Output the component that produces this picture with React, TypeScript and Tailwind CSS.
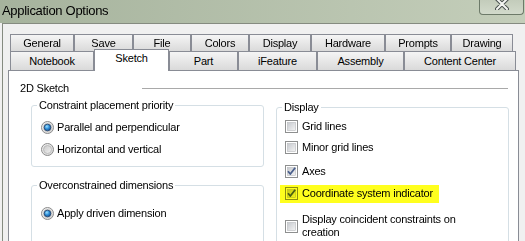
import type { ReactNode } from 'react';

const ROW1: [string, number][] = [
  ['General', 64],
  ['Save', 59],
  ['File', 58],
  ['Colors', 58],
  ['Display', 62],
  ['Hardware', 74],
  ['Prompts', 66],
  ['Drawing', 62],
];

const ROW2: [string, number][] = [
  ['Notebook', 84],
  ['Sketch', 75],
  ['Part', 69],
  ['iFeature', 79],
  ['Assembly', 87],
  ['Content Center', 112],
];

function Radio({ checked }: { checked?: boolean }) {
  return (
    <svg width="13" height="13" viewBox="0 0 13 13" className="shrink-0">
      <defs>
        <linearGradient id="rg-ring" x1="0" y1="0" x2="1" y2="1">
          <stop offset="0" stopColor="#f4f4f4" />
          <stop offset="1" stopColor="#d2d2d2" />
        </linearGradient>
        <linearGradient id="rg-in" x1="0" y1="0" x2="1" y2="1">
          <stop offset="0" stopColor="#c9c9c9" />
          <stop offset="1" stopColor="#f2f2f2" />
        </linearGradient>
        <radialGradient id="rg-dot" cx="0.4" cy="0.35" r="0.7">
          <stop offset="0" stopColor="#9be0ff" />
          <stop offset="0.5" stopColor="#2f8fd8" />
          <stop offset="1" stopColor="#0f4d92" />
        </radialGradient>
      </defs>
      <circle cx="6.5" cy="6.5" r="6" fill="url(#rg-ring)" stroke="#8c8c8c" />
      <circle cx="6.5" cy="6.5" r="4" fill="url(#rg-in)" stroke="#b4b4b4" strokeWidth="0.8" />
      {checked && <circle cx="6.5" cy="6.5" r="3.3" fill="url(#rg-dot)" stroke="#22416b" strokeWidth="0.8" />}
    </svg>
  );
}

function Check({ checked }: { checked?: boolean }) {
  return (
    <svg width="13" height="13" viewBox="0 0 13 13" className="shrink-0">
      <defs>
        <linearGradient id="cb-in" x1="0" y1="0" x2="1" y2="1">
          <stop offset="0" stopColor="#c6c9ce" />
          <stop offset="1" stopColor="#f4f4f4" />
        </linearGradient>
      </defs>
      <rect x="0.5" y="0.5" width="12" height="12" fill="#ffffff" stroke="#8e8f8f" />
      <rect x="2.5" y="2.5" width="8" height="8" fill="url(#cb-in)" stroke="#b7b9bd" strokeWidth="0.6" />
      {checked && (
        <path d="M3 6.2 L5.3 9 L10.2 2.8" fill="none" stroke="#4a5f8c" strokeWidth="1.8" strokeLinejoin="round" />
      )}
    </svg>
  );
}

function Group({ label, className, children }: { label: string; className?: string; children: ReactNode }) {
  return (
    <div className={`rounded-[3px] border border-[#d5dfe5] ${className ?? ''}`}>
      <div className="-mt-[8px] ml-[5px] w-fit bg-white px-[2px] leading-[14px]">{label}</div>
      {children}
    </div>
  );
}

export default function App() {
  return (
    <div className="flex h-[241px] w-[525px] flex-col overflow-hidden bg-[#f0f0f0] font-['Liberation_Sans',Arial,sans-serif] text-[11px] tracking-[-0.2px] text-black">
      {/* title bar */}
      <div className="flex h-[23px] shrink-0 items-start justify-between bg-gradient-to-r from-[#a6b39d] to-[#c4ceba]">
        <span className="pl-[2px] pt-[2px] text-[13px] leading-[18px] tracking-[-0.3px]">Application Options</span>
        <div className="mr-[1px] flex h-[15px] w-[45px] justify-center overflow-hidden rounded-b-[4px] border-x border-b border-[#6d7a69] bg-gradient-to-b from-[#c3ccbb] to-[#d2dacb]">
          <svg width="14" height="12" viewBox="0 0 14 12" className="-mt-[2px]">
            <path d="M2 1 L12 11 M12 1 L2 11" stroke="#4a5150" strokeWidth="4" strokeLinecap="round" />
            <path d="M2 1 L12 11 M12 1 L2 11" stroke="#f4f6f2" strokeWidth="2" strokeLinecap="round" />
          </svg>
        </div>
      </div>

      {/* dialog body */}
      <div className="ml-[2px] flex flex-1 flex-col border-l border-t border-[#858b80] pl-[5px] pt-[10px]">
        <div className="ml-[2px] flex h-[18px]">
          {ROW1.map(([name, w]) => (
            <div
              key={name}
              style={{ width: w }}
              className="flex items-center justify-center border border-[#898c95] bg-gradient-to-b from-[#f5f5f5] to-[#dadada] leading-none"
            >
              {name}
            </div>
          ))}
        </div>
        <div className="relative z-10 ml-[2px] -mt-px flex h-[19px] items-end">
          {ROW2.map(([name, w]) =>
            name === 'Sketch' ? (
              <div
                key={name}
                style={{ width: w }}
                className="-mb-px flex h-[22px] items-start justify-center border-x border-t border-[#898c95] bg-white pt-[3px] leading-none"
              >
                {name}
              </div>
            ) : (
              <div
                key={name}
                style={{ width: w }}
                className="flex h-[19px] items-center justify-center border-x border-t border-[#898c95] bg-gradient-to-b from-[#f5f5f5] to-[#dadada] leading-none"
              >
                {name}
              </div>
            ),
          )}
        </div>

        {/* panel */}
        <div className="mr-[6px] flex-1 border border-[#898c95] bg-white pt-[9px]">
          <div className="flex h-[16px] items-center justify-between pl-[11px] pr-[10px]">
            <span>2D Sketch</span>
            <div className="h-px w-[366px] bg-[#a9a9a9]" />
          </div>
          <div className="flex gap-[12px] pl-[22px]">
            <div className="w-[233px]">
              <Group label="Constraint placement priority" className="mt-[9px] pb-[6px]">
                <div className="mt-[4px] flex h-[22px] items-center gap-[3px] pl-[9px]">
                  <Radio checked />
                  <span>Parallel and perpendicular</span>
                </div>
                <div className="flex h-[22px] items-center gap-[3px] pl-[9px]">
                  <Radio />
                  <span>Horizontal and vertical</span>
                </div>
              </Group>
              <Group label="Overconstrained dimensions" className="mt-[18px] h-[80px]">
                <div className="mt-[10px] flex h-[22px] items-center gap-[3px] pl-[9px]">
                  <Radio checked />
                  <span>Apply driven dimension</span>
                </div>
              </Group>
            </div>
            <div className="w-[233px]">
              <Group label="Display" className="mt-[11px] h-[160px]">
                <div className="mt-[2px] flex h-[20px] items-center gap-[4px] pl-[8px]">
                  <Check />
                  <span>Grid lines</span>
                </div>
                <div className="mt-[1px] flex h-[20px] items-center gap-[4px] pl-[8px]">
                  <Check />
                  <span>Minor grid lines</span>
                </div>
                <div className="mt-[4px] flex h-[20px] items-center gap-[4px] pl-[8px]">
                  <Check checked />
                  <span>Axes</span>
                </div>
                <div className="relative mt-[2px] flex h-[20px] items-center gap-[4px] pl-[8px]">
                  <Check checked />
                  <span>Coordinate system indicator</span>
                  <div className="pointer-events-none absolute left-[3px] top-[2px] h-[18px] w-[159px] bg-[#ffff1e] mix-blend-multiply" />
                </div>
                <div className="mt-[10px] flex items-center gap-[4px] pl-[8px]">
                  <Check />
                  <span className="w-[185px] leading-[13px]">Display coincident constraints on creation</span>
                </div>
              </Group>
            </div>
          </div>
        </div>
      </div>
    </div>
  );
}
